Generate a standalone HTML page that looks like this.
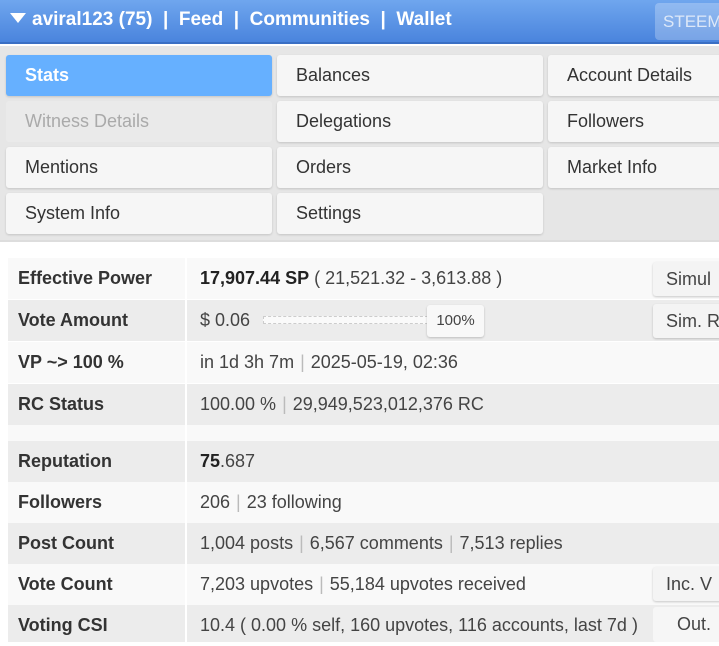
<!DOCTYPE html>
<html><head><meta charset="utf-8"><style>
*{box-sizing:border-box;margin:0;padding:0}
body{width:719px;height:642px;overflow:hidden;background:#fff;font-family:"Liberation Sans",sans-serif;color:#333;position:relative}
.hdr{position:absolute;left:0;top:0;width:719px;height:44px;background:linear-gradient(#6fa6ee,#4a84dd);border-bottom:2px solid #3a6fc4;color:#fff;font-weight:bold;font-size:19px;line-height:40px;padding-left:10px}
.hdr .tri{display:inline-block;width:0;height:0;border-left:8px solid transparent;border-right:8px solid transparent;border-top:10px solid #fff;margin-right:6px;vertical-align:middle;position:relative;top:-2px}
.steem{position:absolute;left:655px;top:3px;width:80px;height:37px;background:rgba(255,255,255,.25);border-radius:4px;color:#dde8f8;font-weight:normal;font-size:17px;line-height:37px;padding-left:8px}
.menu{position:absolute;left:0;top:46px;width:719px;height:196px;background:#e6e6e6;border-bottom:2px solid #ddd}
.b{position:absolute;height:41px;background:#f6f6f6;border-radius:3px;box-shadow:0 1px 2px rgba(0,0,0,.15);font-size:18px;line-height:41px;padding-left:19px;color:#333}
.b.act{background:#66b0ff;color:#fff;font-weight:bold}
.b.dis{background:#eaeaea;color:#aaa;box-shadow:none}
.row{position:absolute;left:8px;width:711px;height:41px;font-size:18px;line-height:41px}
.row .l{position:absolute;left:0;top:0;width:179px;height:100%;padding-left:10px;font-weight:bold;color:#333;border-right:2px solid #fff}
.row .v{position:absolute;left:192px;top:0;color:#444;white-space:nowrap}
.g{background:#ececec}.w{background:#f9f9f9}
.sep{color:#bbb;margin:0 6px}
.sb{position:absolute;left:653px;height:34px;width:80px;background:#f4f4f4;box-shadow:0 1px 2px rgba(0,0,0,.2);border-radius:3px;font-size:18px;line-height:34px;padding-left:13px;color:#444;white-space:nowrap}
</style></head><body>
<div class="hdr"><span class="tri"></span>aviral123 (75) &nbsp;|&nbsp; Feed &nbsp;|&nbsp; Communities &nbsp;|&nbsp; Wallet<div class="steem">STEEM</div></div>
<div class="menu"></div>
<div class="b act" style="left:6px;top:55px;width:266px">Stats</div>
<div class="b" style="left:277px;top:55px;width:266px">Balances</div>
<div class="b" style="left:548px;top:55px;width:180px">Account Details</div>
<div class="b dis" style="left:6px;top:101px;width:266px">Witness Details</div>
<div class="b" style="left:277px;top:101px;width:266px">Delegations</div>
<div class="b" style="left:548px;top:101px;width:180px">Followers</div>
<div class="b" style="left:6px;top:147px;width:266px">Mentions</div>
<div class="b" style="left:277px;top:147px;width:266px">Orders</div>
<div class="b" style="left:548px;top:147px;width:180px">Market Info</div>
<div class="b" style="left:6px;top:193px;width:266px">System Info</div>
<div class="b" style="left:277px;top:193px;width:266px">Settings</div>

<div class="row w" style="top:258px"><div class="l">Effective Power</div><div class="v"><b style="color:#222">17,907.44 SP</b> ( 21,521.32 - 3,613.88 )</div></div>
<div class="sb" style="top:262px">Simul</div>
<div class="row g" style="top:300px"><div class="l">Vote Amount</div><div class="v">$ 0.06</div></div>
<div style="position:absolute;left:263px;top:316px;width:165px;height:8px;border:1px dashed #ccc;background:#fafafa"></div>
<div style="position:absolute;left:427px;top:305px;width:57px;height:32px;background:#f8f8f8;box-shadow:0 1px 2px rgba(0,0,0,.2);border-radius:3px;font-size:15px;line-height:32px;text-align:center;color:#444">100%</div>
<div class="sb" style="top:304px">Sim. R</div>
<div class="row w" style="top:342px"><div class="l">VP ~&gt; 100 %</div><div class="v">in 1d 3h 7m<span class="sep">|</span>2025-05-19, 02:36</div></div>
<div class="row g" style="top:384px"><div class="l">RC Status</div><div class="v">100.00 %<span class="sep">|</span>29,949,523,012,376 RC</div></div>
<div class="row w" style="top:425px;height:16px"><div class="l"></div></div>
<div class="row g" style="top:441px"><div class="l">Reputation</div><div class="v"><b style="color:#222">75</b>.687</div></div>
<div class="row w" style="top:482px"><div class="l">Followers</div><div class="v">206<span class="sep">|</span>23 following</div></div>
<div class="row g" style="top:523px"><div class="l">Post Count</div><div class="v">1,004 posts<span class="sep">|</span>6,567 comments<span class="sep">|</span>7,513 replies</div></div>
<div class="row w" style="top:564px"><div class="l">Vote Count</div><div class="v">7,203 upvotes<span class="sep">|</span>55,184 upvotes received</div></div>
<div class="sb" style="top:567px">Inc. V</div>
<div class="row g" style="top:605px;height:37px"><div class="l">Voting CSI</div><div class="v" style="line-height:41px">10.4 ( 0.00 % self, 160 upvotes, 116 accounts, last 7d )</div></div>
<div class="sb" style="top:607px;height:35px;box-shadow:none;background:#f6f6f6;padding-left:24px">Out.</div>
</body></html>
